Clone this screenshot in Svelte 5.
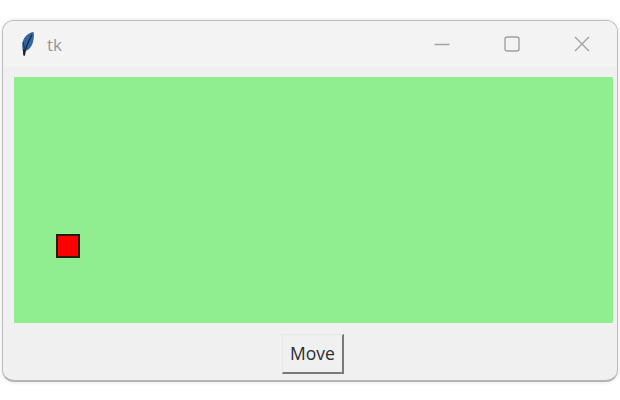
<script>
  let label = "Move";
</script>

<div class="page">
  <div class="window">
    <div class="titlebar">
      <svg class="feather" width="16" height="26" viewBox="0 0 16 26">
        <path d="M14.5 1C10 1.5 5.5 5 3.8 10.5C3 13.5 3 16.5 3.8 19L4.5 24.5L6 24.5L6.5 20C10 19 12.8 15.5 14 11C15 7 15.2 3.5 14.5 1Z" fill="#34659f" />
        <path d="M13 3.5C10.5 8 8 13 5.5 21" stroke="#12294a" stroke-width="1.3" fill="none" />
        <path d="M3.8 18L4.5 24.5L6 24.5L6.5 19.5Z" fill="#1c1c24" />
        <path d="M4.2 11C4.6 14 5 16 5.8 18" stroke="#1d3d68" stroke-width="1.4" fill="none" />
      </svg>
      <span class="title">tk</span>
      <div class="controls">
        <span class="ctl">
          <svg width="16" height="16" viewBox="0 0 16 16"><path d="M0.5 8.5H15.5" stroke="#a3a3a3" stroke-width="1.3" /></svg>
        </span>
        <span class="ctl">
          <svg width="16" height="16" viewBox="0 0 16 16"><rect x="1" y="1" width="14" height="14" rx="2" fill="none" stroke="#a0a0a0" stroke-width="1.4" /></svg>
        </span>
        <span class="ctl">
          <svg width="16" height="16" viewBox="0 0 16 16"><path d="M1 1L15 15M15 1L1 15" stroke="#a0a0a0" stroke-width="1.3" /></svg>
        </span>
      </div>
    </div>
    <div class="content">
      <div class="canvas">
        <div class="square"></div>
      </div>
      <div class="footer">
        <button class="move">{label}</button>
      </div>
    </div>
  </div>
</div>

<style>
  :global(body) {
    margin: 0;
    background: #fff;
  }
  .page {
    width: 620px;
    height: 400px;
    padding: 20px 2px 18px 2px;
    box-sizing: border-box;
  }
  .window {
    height: 100%;
    display: flex;
    flex-direction: column;
    box-sizing: border-box;
    border: 1px solid #bdbdbd;
    border-bottom: 2px solid #b4b4b4;
    border-radius: 12px;
    background: #f0f0f0;
    box-shadow: 0 0 4px rgba(0, 0, 0, 0.12);
    font-family: "Open Sans", "Liberation Sans", sans-serif;
    overflow: hidden;
  }
  .titlebar {
    height: 46px;
    flex: none;
    display: flex;
    align-items: center;
    background: #f3f3f3;
    padding-left: 16px;
  }
  .feather {
    flex: none;
  }
  .title {
    margin-left: 12px;
    font-size: 17px;
    color: #969696;
  }
  .controls {
    margin-left: auto;
    display: flex;
  }
  .ctl {
    width: 70px;
    height: 46px;
    display: flex;
    align-items: center;
    justify-content: center;
  }
  .content {
    flex: 1;
    display: flex;
    flex-direction: column;
    padding: 10px 4px 0 11px;
  }
  .canvas {
    height: 246px;
    flex: none;
    position: relative;
    background: #90ee90;
  }
  .square {
    position: absolute;
    left: 42px;
    top: 157px;
    width: 24px;
    height: 24px;
    box-sizing: border-box;
    background: #ff0000;
    border: 2px solid #2a1a10;
  }
  .footer {
    display: flex;
    justify-content: center;
    padding: 11px 1px 0 0;
  }
  .move {
    width: 62px;
    height: 40px;
    padding: 0 0 2px;
    box-sizing: border-box;
    background: #f0f0f0;
    border: 1px solid #e8e8e8;
    border-right: 2px solid #7a7a7a;
    border-bottom: 2px solid #7a7a7a;
    font-family: "Open Sans", "Liberation Sans", sans-serif;
    font-size: 17.5px;
    color: #2c2c33;
  }
</style>
